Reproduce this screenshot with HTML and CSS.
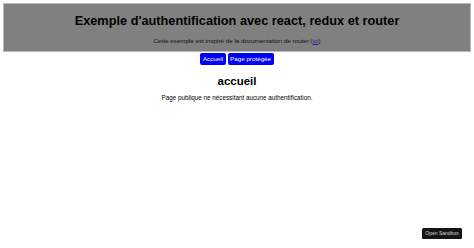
FILE: index.html
```html
<!DOCTYPE html>
<html lang="fr">
<head>
<meta charset="utf-8">
<title>Exemple</title>
<link rel="stylesheet" href="styles.css">
</head>
<body>
<div class="app">
  <header class="banner">
    <h1 class="title">Exemple d'authentification avec react, redux et router</h1>
    <p class="subtitle">Cette exemple est inspiré de la documentation de router (<a href="#" class="link">ici</a>)</p>
  </header>
  <nav class="nav">
    <button class="nav-btn">Accueil</button>
    <button class="nav-btn">Page protégée</button>
  </nav>
  <main class="content">
    <h2 class="page-title">accueil</h2>
    <p class="page-text">Page publique ne nécessitant aucune authentification.</p>
  </main>
</div>
<div class="sandbox">Open Sandbox</div>
</body>
</html>
```
FILE: styles.css
```css
html, body {
  margin: 0;
  padding: 0;
  background: #ffffff;
  font-family: "Liberation Sans", Arial, sans-serif;
  color: #000;
}
.app {
  padding: 3px;
  display: flex;
  flex-direction: column;
}
.banner {
  height: 49px;
  box-sizing: border-box;
  background: #808080;
  border: 1px solid #b8b8b8;
  display: flex;
  flex-direction: column;
  align-items: center;
  padding-top: 8.5px;
}
.title {
  margin: 0;
  font-size: 12.75px;
  line-height: 15px;
  font-weight: bold;
  color: #000;
}
.subtitle {
  margin: 9.5px 0 0 0;
  font-size: 6.25px;
  line-height: 8px;
  color: #111;
}
.link {
  color: #1a1aa8;
  text-decoration: underline;
}
.nav {
  display: flex;
  justify-content: center;
  gap: 2px;
  margin-top: 1px;
}
.nav-btn {
  height: 12px;
  padding: 0 2.5px;
  margin: 0;
  border: none;
  border-radius: 2px;
  background: #0000f2;
  color: #fff;
  font-family: "Liberation Sans", Arial, sans-serif;
  font-size: 6.25px;
  line-height: 12px;
}
.content {
  display: flex;
  flex-direction: column;
  align-items: center;
}
.page-title {
  margin: 9px 0 0 0;
  font-size: 11.5px;
  line-height: 14px;
  font-weight: bold;
}
.page-text {
  margin: 6px 0 0 0;
  font-size: 6.3px;
  line-height: 8px;
}
.sandbox {
  position: fixed;
  right: 12px;
  bottom: 9px;
  width: 40px;
  height: 11px;
  background: #151515;
  color: #d8d8d8;
  border-radius: 1.5px;
  font-size: 5px;
  line-height: 11px;
  text-align: center;
}
```
